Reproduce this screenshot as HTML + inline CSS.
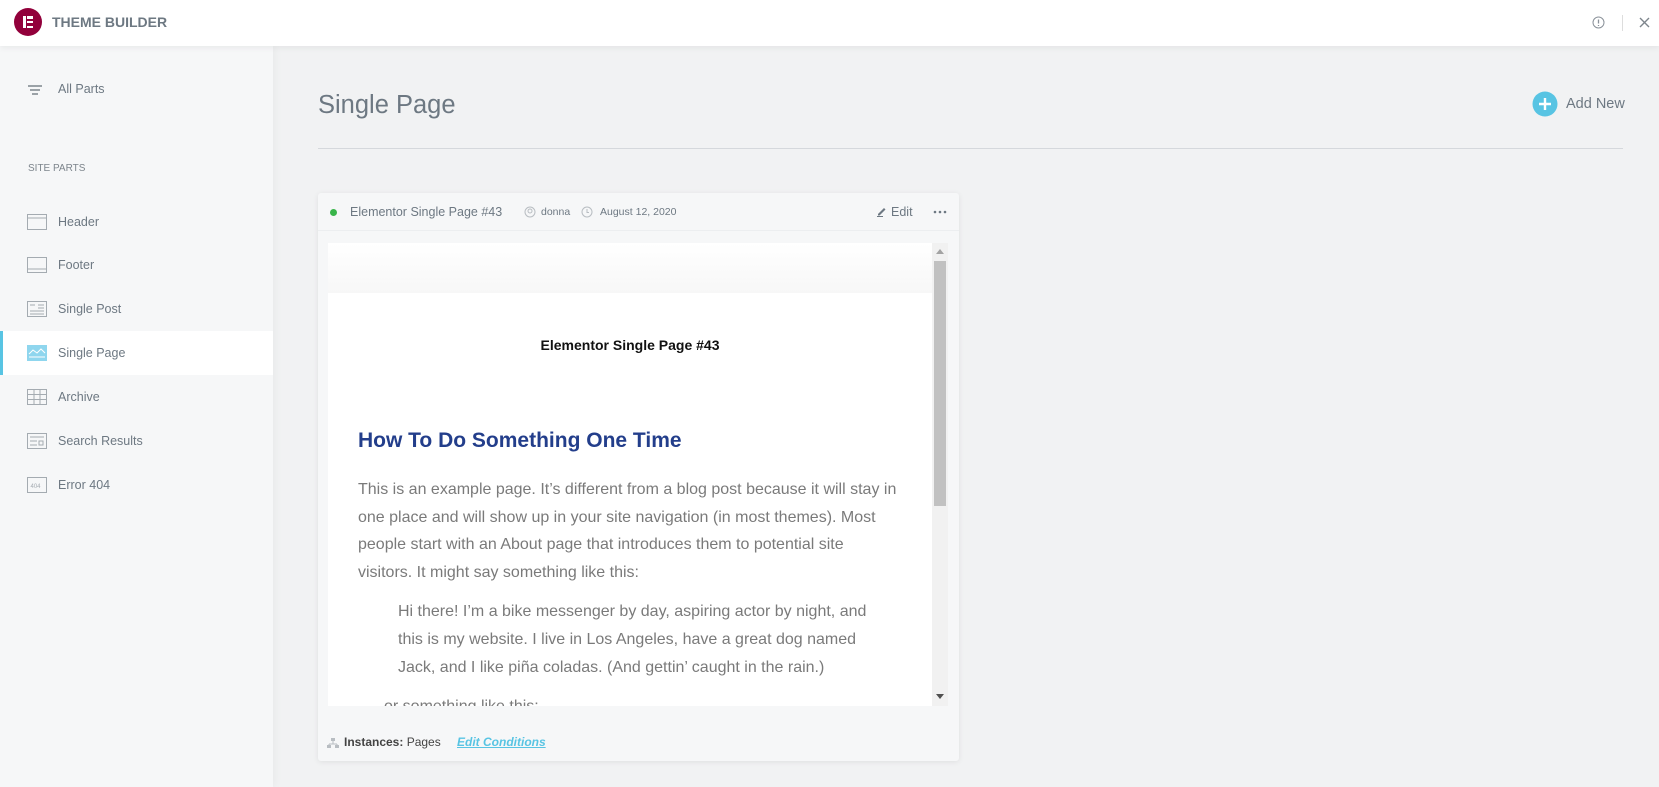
<!DOCTYPE html>
<html><head><meta charset="utf-8"><style>
*{margin:0;padding:0;box-sizing:border-box}
body{width:1659px;height:787px;overflow:hidden;background:#f1f2f3;font-family:"Liberation Sans",Arial,sans-serif;position:relative}
.top{position:absolute;left:0;top:0;width:1659px;height:46px;background:#fff;box-shadow:0 2px 6px rgba(0,0,0,.06);z-index:3}
.logo{position:absolute;left:14px;top:8px;width:28px;height:28px;border-radius:50%;background:#92003b}
.logo i{position:absolute;background:#fff}
.ttl{position:absolute;left:52px;top:14px;font-size:14px;font-weight:bold;color:#6d7882}
.side{position:absolute;left:0;top:46px;width:273px;height:741px;background:#f6f7f8;box-shadow:2px 0 8px rgba(0,0,0,.04)}
.it{position:absolute;left:0;width:273px;height:44px;font-size:12.5px;color:#6d7882;line-height:44px;padding-left:58px}
.it svg{position:absolute;left:27px;top:14px}
.act{background:#fff;border-left:3px solid #58c4e3;padding-left:55px}
.act svg{left:24px}
.main h1{position:absolute;left:318px;top:91px;font-size:25.5px;font-weight:normal;color:#6d7882}
.hr{position:absolute;left:318px;top:148px;width:1305px;height:1px;background:#d5d8dc}
.card{position:absolute;left:318px;top:193px;width:641px;height:568px;background:#f6f7f8;box-shadow:0 1px 6px rgba(0,0,0,.08);border-radius:3px}
.pv{position:absolute;left:10px;top:50px;width:620px;height:463px;background:#fff;overflow:hidden}
.p{position:absolute;font-size:16px;color:#7a7a7a;line-height:27.5px}
</style></head><body>
<div class="top">
 <div class="logo"><i style="left:9px;top:8px;width:2.5px;height:12px"></i><i style="left:13px;top:8px;width:6px;height:2.5px"></i><i style="left:13px;top:12.8px;width:6px;height:2.5px"></i><i style="left:13px;top:17.5px;width:6px;height:2.5px"></i></div>
 <div class="ttl">THEME BUILDER</div>
 <svg style="position:absolute;left:1592px;top:16px" width="13" height="13"><circle cx="6.5" cy="6.5" r="5.5" fill="none" stroke="#8a9199" stroke-width="1"/><path d="M6.5 3.5v4M6.5 9v1" stroke="#8a9199" stroke-width="1.3"/></svg>
 <div style="position:absolute;left:1622px;top:15px;width:1px;height:16px;background:#ddd"></div>
 <svg style="position:absolute;left:1639px;top:17px" width="11" height="11"><path d="M1 1L10 10M10 1L1 10" stroke="#7d858c" stroke-width="1.4"/></svg>
</div>
<div class="side">
 <div class="it" style="top:21px"><svg width="16" height="12" style="top:17px"><path d="M1 2h14M3 6h10M5 10h6" stroke="#7d858c" stroke-width="1.4"/></svg>All Parts</div>
 <div style="position:absolute;left:28px;top:117px;font-size:10px;color:#7d858c">SITE PARTS</div>
 <div class="it" style="top:154px"><svg width="20" height="16"><rect x=".5" y=".5" width="19" height="15" fill="none" stroke="#a4abb1"/><path d="M1 4h18" stroke="#a4abb1"/></svg>Header</div>
 <div class="it" style="top:197px"><svg width="20" height="16"><rect x=".5" y=".5" width="19" height="15" fill="none" stroke="#a4abb1"/><path d="M1 12h18" stroke="#a4abb1"/></svg>Footer</div>
 <div class="it" style="top:241px"><svg width="20" height="16"><rect x=".5" y=".5" width="19" height="15" fill="none" stroke="#a4abb1"/><path d="M3 4h5M11 4h6M11 7h6M3 10h14M3 13h14" stroke="#a4abb1"/></svg>Single Post</div>
 <div class="it act" style="top:285px"><svg width="20" height="16"><rect x="0" y="0" width="20" height="16" fill="#8fd6ee"/><path d="M2 9l4-4 4 3 4-4 4 4" stroke="#fff" fill="none"/><path d="M2 12h16" stroke="#fff"/></svg>Single Page</div>
 <div class="it" style="top:329px"><svg width="20" height="16"><rect x=".5" y=".5" width="19" height="15" fill="none" stroke="#a4abb1"/><path d="M1 5.5h18M1 10.5h18M7 1v14M13 1v14" stroke="#a4abb1"/></svg>Archive</div>
 <div class="it" style="top:373px"><svg width="20" height="16"><rect x=".5" y=".5" width="19" height="15" fill="none" stroke="#a4abb1"/><path d="M3 4h14M3 8h7M3 12h7" stroke="#a4abb1"/><rect x="12" y="8" width="4" height="4" fill="none" stroke="#a4abb1"/></svg>Search Results</div>
 <div class="it" style="top:417px"><svg width="20" height="16"><rect x=".5" y=".5" width="19" height="15" fill="none" stroke="#a4abb1"/><text x="3.5" y="11" font-size="6" fill="#a4abb1" font-family="Liberation Sans">404</text></svg>Error 404</div>
</div>
<div class="main">
 <h1>Single Page</h1>
 <svg style="position:absolute;left:1532px;top:91px" width="26" height="26"><circle cx="13" cy="13" r="12.5" fill="#58c4e3"/><path d="M13 7v12M7 13h12" stroke="#fff" stroke-width="2.4"/></svg>
 <div style="position:absolute;left:1566px;top:96px;font-size:14.5px;color:#6d7882">Add New</div>
 <div class="hr"></div>
 <div class="card">
  <div style="position:absolute;left:12px;top:16px;width:7px;height:7px;border-radius:50%;background:#39b54a"></div>
  <div style="position:absolute;left:32px;top:12px;font-size:12.5px;color:#6d7882">Elementor Single Page #43</div>
  <svg style="position:absolute;left:206px;top:13px" width="12" height="12"><circle cx="6" cy="6" r="5" fill="none" stroke="#b8bdc2"/><circle cx="6" cy="5" r="2" fill="none" stroke="#b8bdc2"/></svg>
  <div style="position:absolute;left:223px;top:13px;font-size:10.5px;color:#6d7882">donna</div>
  <svg style="position:absolute;left:263px;top:13px" width="12" height="12"><circle cx="6" cy="6" r="5" fill="none" stroke="#b8bdc2"/><path d="M6 3v3.5h2" stroke="#b8bdc2" fill="none"/></svg>
  <div style="position:absolute;left:282px;top:13px;font-size:10.5px;color:#6d7882">August 12, 2020</div>
  <svg style="position:absolute;left:558px;top:12px" width="12" height="12"><path d="M2 9L8 3l1.5 1.5-6 6H2z" fill="#6d7882"/><path d="M1 11.5h6" stroke="#6d7882"/></svg>
  <div style="position:absolute;left:573px;top:12px;font-size:12.5px;color:#6d7882">Edit</div>
  <svg style="position:absolute;left:615px;top:17px" width="14" height="4"><circle cx="2" cy="2" r="1.3" fill="#6d7882"/><circle cx="7" cy="2" r="1.3" fill="#6d7882"/><circle cx="12" cy="2" r="1.3" fill="#6d7882"/></svg>
  <div style="position:absolute;left:0;top:37px;width:641px;height:1px;background:#eceef0"></div>
  <div class="pv">
   <div style="position:absolute;left:0;top:0;width:620px;height:50px;background:linear-gradient(#fff,#f7f7f7)"></div>
   <div style="position:absolute;left:0;top:94px;width:604px;text-align:center;font-size:14px;font-weight:bold;color:#111">Elementor Single Page #43</div>
   <div style="position:absolute;left:30px;top:186px;font-size:21px;font-weight:bold;color:#233e8b">How To Do Something One Time</div>
   <div class="p" style="left:30px;top:233px;width:542px">This is an example page. It’s different from a blog post because it will stay in one place and will show up in your site navigation (in most themes). Most people start with an About page that introduces them to potential site visitors. It might say something like this:</div>
   <div class="p" style="left:70px;top:355px;width:480px;line-height:28px">Hi there! I’m a bike messenger by day, aspiring actor by night, and this is my website. I live in Los Angeles, have a great dog named Jack, and I like piña coladas. (And gettin’ caught in the rain.)</div>
   <div class="p" style="left:40px;top:450px">…or something like this:</div>
   <div style="position:absolute;left:604px;top:0;width:16px;height:463px;background:#f1f1f1"></div>
   <div style="position:absolute;left:606px;top:18px;width:12px;height:245px;background:#c1c1c1"></div>
   <div style="position:absolute;left:608px;top:6px;width:0;height:0;border-left:4px solid transparent;border-right:4px solid transparent;border-bottom:5px solid #a3a3a3"></div>
   <div style="position:absolute;left:608px;top:451px;width:0;height:0;border-left:4px solid transparent;border-right:4px solid transparent;border-top:5px solid #505050"></div>
  </div>
  <svg style="position:absolute;left:9px;top:544px" width="12" height="12"><rect x="4" y="1" width="4" height="3" fill="#b8bdc2"/><path d="M6 4v3M2 7h8M2 7v2M10 7v2" stroke="#b8bdc2"/><rect x="0" y="8" width="4" height="3" fill="#b8bdc2"/><rect x="8" y="8" width="4" height="3" fill="#b8bdc2"/></svg>
  <div style="position:absolute;left:26px;top:542px;font-size:12px;color:#444"><b>Instances:</b> Pages</div>
  <div style="position:absolute;left:139px;top:542px;font-size:12px;color:#58c4e3;font-style:italic;font-weight:bold;text-decoration:underline">Edit Conditions</div>
 </div>
</div>
</body></html>
